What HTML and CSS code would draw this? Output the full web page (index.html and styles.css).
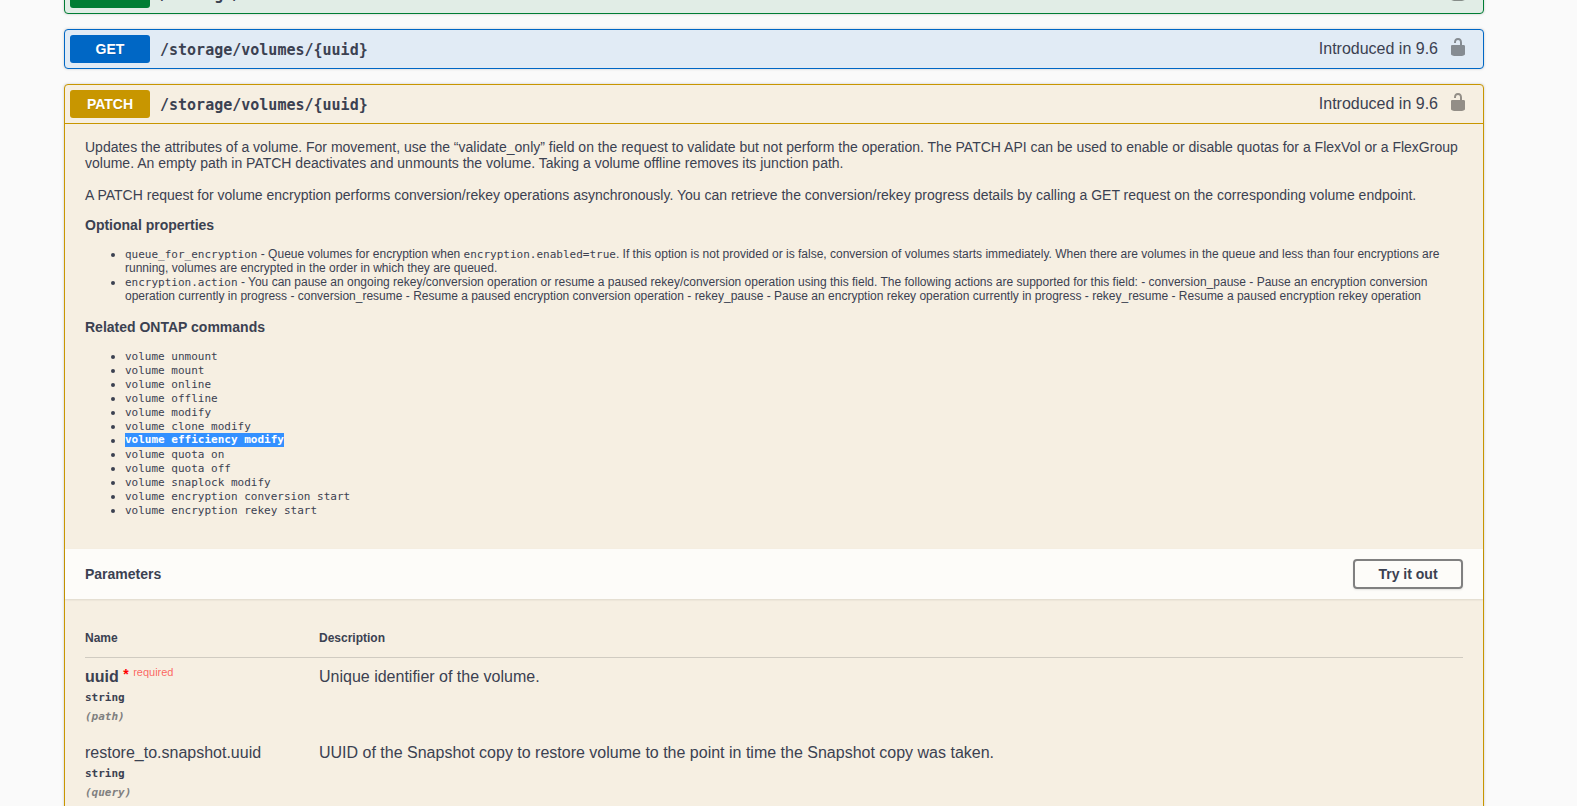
FILE: index.html
```html
<!DOCTYPE html>
<html lang="en">
<head>
<meta charset="utf-8">
<title>Volumes API</title>
<link rel="stylesheet" href="styles.css">
</head>
<body>
<svg class="sprite" aria-hidden="true">
  <symbol id="unlocked" viewBox="0 0 20 20">
    <path d="M15.8 8H14V5.6C14 2.703 12.665 1 10 1 7.334 1 6 2.703 6 5.6V6h2v-.801C8 3.754 8.797 3 10 3c1.203 0 2 .754 2 2.199V8H4c-.553 0-1 .646-1 1.199V17c0 .549.428 1.139.951 1.307l1.197.387C5.672 18.861 6.55 19 7.1 19h5.8c.549 0 1.428-.139 1.951-.307l1.196-.387c.524-.167.953-.757.953-1.306V9.199C17 8.646 16.352 8 15.8 8z"/>
  </symbol>
</svg>
<main class="operations">
  <section class="opblock opblock-post">
    <div class="summary">
      <span class="method">POST</span>
      <a class="path" href="#post-volumes">/storage/volumes</a>
      <span class="intro">Introduced in 9.6</span>
      <button class="lock" type="button" aria-label="Authorize"><svg class="lock-icon"><use href="#unlocked"/></svg></button>
    </div>
  </section>

  <section class="opblock opblock-get">
    <div class="summary">
      <span class="method">GET</span>
      <a class="path" href="#get-volume">/storage/volumes/{uuid}</a>
      <span class="intro">Introduced in 9.6</span>
      <button class="lock" type="button" aria-label="Authorize"><svg class="lock-icon"><use href="#unlocked"/></svg></button>
    </div>
  </section>

  <section class="opblock opblock-patch">
    <div class="summary summary-open">
      <span class="method">PATCH</span>
      <a class="path" href="#patch-volume">/storage/volumes/{uuid}</a>
      <span class="intro">Introduced in 9.6</span>
      <button class="lock" type="button" aria-label="Authorize"><svg class="lock-icon"><use href="#unlocked"/></svg></button>
    </div>

    <div class="description">
      <p>Updates the attributes of a volume. For movement, use the “validate_only” field on the request to validate but not perform the operation. The PATCH API can be used to enable or disable quotas for a FlexVol or a FlexGroup volume. An empty path in PATCH deactivates and unmounts the volume. Taking a volume offline removes its junction path.</p>
      <p>A PATCH request for volume encryption performs conversion/rekey operations asynchronously. You can retrieve the conversion/rekey progress details by calling a GET request on the corresponding volume endpoint.</p>
      <h3>Optional properties</h3>
      <ul>
        <li><code>queue_for_encryption</code> - Queue volumes for encryption when <code>encryption.enabled=true</code>. If this option is not provided or is false, conversion of volumes starts immediately. When there are volumes in the queue and less than four encryptions are running, volumes are encrypted in the order in which they are queued.</li>
        <li><code>encryption.action</code> - You can pause an ongoing rekey/conversion operation or resume a paused rekey/conversion operation using this field. The following actions are supported for this field: - conversion_pause - Pause an encryption conversion operation currently in progress - conversion_resume - Resume a paused encryption conversion operation - rekey_pause - Pause an encryption rekey operation currently in progress - rekey_resume - Resume a paused encryption rekey operation</li>
      </ul>
      <h3>Related ONTAP commands</h3>
      <ul>
        <li><code>volume unmount</code></li>
        <li><code>volume mount</code></li>
        <li><code>volume online</code></li>
        <li><code>volume offline</code></li>
        <li><code>volume modify</code></li>
        <li><code>volume clone modify</code></li>
        <li><code class="selected">volume efficiency modify</code></li>
        <li><code>volume quota on</code></li>
        <li><code>volume quota off</code></li>
        <li><code>volume snaplock modify</code></li>
        <li><code>volume encryption conversion start</code></li>
        <li><code>volume encryption rekey start</code></li>
      </ul>
    </div>

    <div class="section-header">
      <h4>Parameters</h4>
      <button class="try-out" type="button">Try it out</button>
    </div>

    <div class="parameters">
      <table class="param-table">
        <thead>
          <tr><th class="col-name" scope="col">Name</th><th scope="col">Description</th></tr>
        </thead>
        <tbody>
          <tr>
            <td>
              <div class="param-name param-required">uuid <span class="star">*</span> <span class="required">required</span></div>
              <div class="param-type">string</div>
              <div class="param-in">(path)</div>
            </td>
            <td>Unique identifier of the volume.</td>
          </tr>
          <tr>
            <td>
              <div class="param-name">restore_to.snapshot.uuid</div>
              <div class="param-type">string</div>
              <div class="param-in">(query)</div>
            </td>
            <td>UUID of the Snapshot copy to restore volume to the point in time the Snapshot copy was taken.</td>
          </tr>
        </tbody>
      </table>
    </div>
  </section>
</main>
</body>
</html>
```
FILE: styles.css
```css
* {
  box-sizing: border-box;
}

body {
  margin: 0;
  background: #fafafa;
  color: #3b4151;
  font-family: Arial, "Liberation Sans", sans-serif;
  font-size: 14px;
  line-height: 16px;
}

html,
body {
  height: 100%;
  overflow: hidden;
}

.sprite {
  display: none;
}

/* The list is scrolled so that the first operation is partly out of view */
.operations {
  display: flex;
  flex-direction: column;
  gap: 15px;
  margin-top: -26px;
  padding: 0 93px 0 64px;
}

.opblock {
  border: 1px solid var(--accent);
  border-radius: 4px;
  background: var(--tint);
  box-shadow: 0 0 3px rgba(0, 0, 0, 0.19);
}

.opblock-post {
  --accent: #007d34;
  --tint: #e1ede6;
}

.opblock-get {
  --accent: #0067c5;
  --tint: #e1ebf5;
}

.opblock-patch {
  --accent: #c89600;
  --tint: #f6efe2;
}

.summary {
  display: flex;
  align-items: center;
  gap: 10px;
  padding: 5px;
}

.summary-open {
  border-bottom: 1px solid var(--accent);
}

.method {
  width: 80px;
  padding: 6px 0;
  border-radius: 3px;
  background: var(--accent);
  color: #fff;
  font-weight: 700;
  text-align: center;
  text-shadow: 0 1px 0 rgba(0, 0, 0, 0.1);
}

.path {
  flex: 1;
  padding-top: 2px;
  color: #3b4151;
  font: 700 15px/18px "DejaVu Sans Mono", monospace;
  text-decoration: none;
}

.intro {
  font-size: 16px;
  line-height: 18px;
}

.lock {
  display: flex;
  padding: 0 10px 4px 0;
  border: 0;
  background: none;
}

.lock-icon {
  width: 20px;
  height: 20px;
  opacity: 0.4;
}

.description {
  padding: 15px 20px 32px;
}

.description p {
  margin: 0;
}

.description p + p {
  margin-top: 16px;
}

.description h3 {
  margin: 14px 0;
  font-size: 14px;
}

.description ul {
  margin: 14px 0 0;
  padding-left: 40px;
  font-size: 12px;
  line-height: 14px;
}

.description ul + h3 {
  margin-top: 16px;
}

code {
  font-family: "DejaVu Sans Mono", monospace;
  font-size: 11px;
  line-height: 12px;
}

.selected {
  display: inline-block;
  background: #3390ff;
  color: #fff;
  font-weight: 700;
  line-height: 14px;
  vertical-align: top;
}

.section-header {
  display: flex;
  align-items: center;
  justify-content: space-between;
  padding: 10px 20px;
  background: rgba(255, 255, 255, 0.8);
  box-shadow: 0 1px 2px rgba(0, 0, 0, 0.1);
}

.section-header h4 {
  margin: 0;
  font-size: 14px;
}

.try-out {
  width: 110px;
  height: 30px;
  padding: 0;
  border: 2px solid #808080;
  border-radius: 4px;
  background: transparent;
  box-shadow: 0 1px 2px rgba(0, 0, 0, 0.1);
  color: #3b4151;
  font: 700 14px/16px Arial, "Liberation Sans", sans-serif;
}

.parameters {
  padding: 20px;
}

.param-table {
  width: 100%;
  border-collapse: collapse;
}

.param-table th {
  padding: 12px 0;
  border-bottom: 1px solid #d0cbc1;
  font-size: 12px;
  line-height: 14px;
  text-align: left;
}

.param-table .col-name {
  width: 234px;
}

.param-table td {
  padding: 10px 0;
  font-size: 16px;
  line-height: 18px;
  vertical-align: top;
}

.param-required {
  font-weight: 700;
}

.star,
.required {
  color: #f00;
  line-height: 0;
}

.star {
  font-size: 14px;
  vertical-align: 3px;
}

.required {
  color: rgba(255, 0, 0, 0.6);
  font-size: 11px;
  font-weight: 400;
  vertical-align: 6px;
}

.param-type,
.param-in {
  padding-top: 5px;
  font: 700 11px/14px "DejaVu Sans Mono", monospace;
}

.param-in {
  color: #808080;
  font-style: italic;
}
```
